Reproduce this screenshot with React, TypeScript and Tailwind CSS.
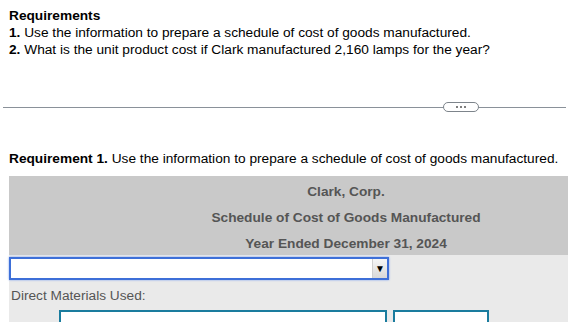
export default function App() {
  return (
    <div className="w-[568px] h-[322px] overflow-hidden bg-white" style={{ fontFamily: '"Liberation Sans", Arial, sans-serif' }}>
      <div className="pl-[9px] pt-[7px] text-[13.7px] leading-[17px] text-black">
        <div className="font-bold">Requirements</div>
        <div><span className="font-bold">1.</span> Use the information to prepare a schedule of cost of goods manufactured.</div>
        <div><span className="font-bold">2.</span> What is the unit product cost if Clark manufactured 2,160 lamps for the year?</div>
      </div>
      <div className="mt-[44px] ml-[3px] w-[563px] h-[10px] relative flex items-center">
        <div className="w-full h-px bg-[#8a9199]" />
        <div className="absolute left-[440px] top-0 w-[36px] h-[10px] rounded-full border border-[#7d848b] bg-white flex items-center justify-center gap-[2px]">
          <span className="w-[2px] h-[2px] bg-[#555] rounded-full" />
          <span className="w-[2px] h-[2px] bg-[#555] rounded-full" />
          <span className="w-[2px] h-[2px] bg-[#555] rounded-full" />
        </div>
      </div>
      <div className="pl-[9px] mt-[38px] text-[13.7px] leading-[17px] text-black whitespace-nowrap">
        <span className="font-bold">Requirement 1.</span> Use the information to prepare a schedule of cost of goods manufactured.
      </div>
      <div className="ml-[9px] mt-[9px] w-[674px]">
        <div className="bg-[#c9c9c9] h-[79px] flex flex-col items-center pt-[2px] text-[13.7px] font-bold text-[#555]">
          <div className="h-[27px] leading-[27px]">Clark, Corp.</div>
          <div className="h-[26px] leading-[26px]">Schedule of Cost of Goods Manufactured</div>
          <div className="h-[24px] leading-[26px]">Year Ended December 31, 2024</div>
        </div>
        <div className="bg-[#eaeaea] h-[70px] flex flex-col">
          <div className="pt-[2px]">
            <div className="w-[380px] h-[23px] border-2 border-[#3d6fd8] bg-white shadow-[0_0_2px_#7aa0f0] flex justify-end items-center pr-[0px]">
              <div className="w-[15px] h-[19px] bg-gradient-to-b from-[#f6f6f6] to-[#d8d8d8] border-l border-[#cfcfcf] flex items-center justify-center text-[10px] leading-none text-black">▼</div>
            </div>
          </div>
          <div className="pl-[2px] mt-[7px] text-[13.7px] leading-[17px] text-[#555]">Direct Materials Used:</div>
          <div className="flex mt-[6px] ml-[50px] gap-[6px]">
            <div className="w-[328px] h-[20px] border-2 border-[#1a7c9e] bg-white" />
            <div className="w-[96px] h-[20px] border-2 border-[#1a7c9e] bg-white" />
          </div>
        </div>
      </div>
    </div>
  );
}
